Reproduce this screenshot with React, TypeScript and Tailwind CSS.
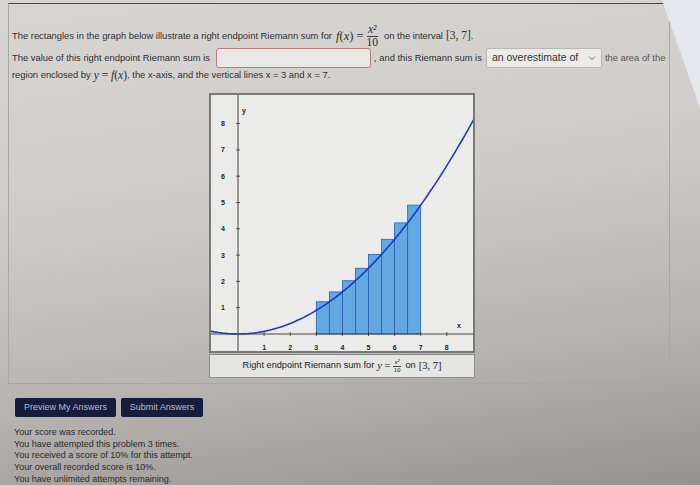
import React from 'react';

const sans = { fontFamily: '"Liberation Sans", Arial, sans-serif' };
const serif = { fontFamily: '"Liberation Serif", "DejaVu Serif", serif' };

// plot mapping (inner svg coords)
const px = (x: number) => 27 + 26.1 * x;
const py = (y: number) => 239 - 26.3 * y;
const f = (x: number) => (x * x) / 10;

function Frac({ top, bottom, small }: { top: React.ReactNode; bottom: React.ReactNode; small?: boolean }) {
  return (
    <span
      className={`inline-flex flex-col items-center leading-none align-middle mx-[2px] ${small ? 'text-[7px]' : 'text-[11.5px]'}`}
      style={serif}
    >
      <span className="px-[1px] border-b border-[#444]">{top}</span>
      <span className="px-[1px]">{bottom}</span>
    </span>
  );
}

function Plot() {
  const pts: string[] = [];
  for (let x = -1.1; x <= 9.1; x += 0.1) pts.push(`${px(x).toFixed(1)},${py(f(x)).toFixed(1)}`);
  const rects = Array.from({ length: 8 }, (_, i) => {
    const xr = 3 + 0.5 * (i + 1);
    return { x: px(xr - 0.5), w: px(xr) - px(xr - 0.5), y: py(f(xr)), h: py(0) - py(f(xr)) };
  });
  return (
    <svg width="262" height="256" viewBox="0 0 262 256" className="block">
      {rects.map((r, i) => (
        <rect key={i} x={r.x} y={r.y} width={r.w} height={r.h} fill="#62a8e2" stroke="#2d5db3" strokeWidth="0.8" />
      ))}
      <line x1={px(0)} y1="0" x2={px(0)} y2="256" stroke="#333" strokeWidth="0.9" />
      <line x1="0" y1={py(0)} x2="262" y2={py(0)} stroke="#333" strokeWidth="0.9" />
      {[1, 2, 3, 4, 5, 6, 7, 8].map((n) => (
        <g key={n} fontFamily='"Liberation Sans", Arial, sans-serif' fontSize="7" fontWeight="700" fill="#222">
          <line x1={px(n)} y1={py(0) - 2} x2={px(n)} y2={py(0) + 2} stroke="#333" strokeWidth="0.8" />
          <text x={px(n)} y={py(0) + 16} textAnchor="middle">{n}</text>
          <line x1={px(0) - 2} y1={py(n)} x2={px(0) + 2} y2={py(n)} stroke="#333" strokeWidth="0.8" />
          <text x="12" y={py(n) + 2.5} textAnchor="middle">{n}</text>
        </g>
      ))}
      <text x="31" y="18" fontFamily='"Liberation Sans", Arial, sans-serif' fontSize="7" fontWeight="700" fill="#222">y</text>
      <text x="246" y="233" fontFamily='"Liberation Sans", Arial, sans-serif' fontSize="7" fontWeight="700" fill="#222">x</text>
      <polyline points={pts.join(' ')} fill="none" stroke="#1f3cc0" strokeWidth="1.6" />
    </svg>
  );
}

export default function App() {
  return (
    <div
      className="relative w-[700px] h-[485px] overflow-hidden text-[#2e2e2e] bg-[linear-gradient(172deg,#d8d6d3_0%,#cecbc8_40%,#b5b2af_72%,#96928f_100%)]"
      style={sans}
    >
      {/* bright glare at top right */}
      <div className="absolute top-0 right-0 w-[38px] h-[108px] bg-[#e6e6ee] [clip-path:polygon(0_0,100%_0,100%_100%)]" />

      {/* question panel */}
      <div className="ml-[8px] mt-[3px] w-[662px] h-[381px] border border-[#a9a7a4] border-t-[#4a4a4a] pl-[3px] pt-[20px] text-[9.4px]">
        {/* line 1 */}
        <div className="flex items-center h-[24px] whitespace-nowrap">
          <span>The rectangles in the graph below illustrate a right endpoint Riemann sum for</span>
          <span className="ml-[4px] text-[12.5px]" style={serif}>
            <i>f</i>(<i>x</i>) =
          </span>
          <Frac top={<i>x²</i>} bottom="10" />
          <span className="ml-[3px]">on the interval</span>
          <span className="ml-[3px] text-[11.5px]" style={serif}>[3, 7]</span>
          <span>.</span>
        </div>

        {/* line 2 */}
        <div className="flex items-center h-[20px] whitespace-nowrap">
          <span>The value of this right endpoint Riemann sum is</span>
          <div className="ml-[6px] w-[155px] h-[20px] rounded-[3px] border border-[#c07a78] bg-[#e9e8e5]" />
          <span className="ml-[3px]">, and this Riemann sum is</span>
          <div className="ml-[4px] w-[116px] h-[20px] rounded-[2px] border border-[#b9b7b4] bg-[#ecebe8] flex items-center justify-between pl-[5px] pr-[5px]">
            <span className="text-[10.5px] text-[#333]">an overestimate of</span>
            <svg width="8" height="6" viewBox="0 0 8 6">
              <path d="M1 1.5 L4 4.5 L7 1.5" fill="none" stroke="#777" strokeWidth="1" />
            </svg>
          </div>
          <span className="ml-[3px] text-[#555]">the area of the</span>
        </div>

        {/* line 3 */}
        <div className="flex items-center h-[15px] whitespace-nowrap">
          <span>region enclosed by</span>
          <span className="ml-[3px] text-[11.5px]" style={serif}>
            <i>y</i> = <i>f</i>(<i>x</i>)
          </span>
          <span>, the x-axis, and the vertical lines x = 3 and x = 7.</span>
        </div>

        {/* graph */}
        <div className="ml-[197px] mt-[10px] w-[266px]">
          <div className="h-[260px] border-2 border-[#7a7977] bg-[#ebecea]">
            <Plot />
          </div>
          <div className="mt-[1px] h-[24px] border border-[#8d8b89] bg-[#e5e5e2] flex items-center justify-center whitespace-nowrap text-[9.2px] text-[#222]">
            <span>Right endpoint Riemann sum for</span>
            <span className="ml-[3px] text-[10.5px]" style={serif}>
              <i>y</i> =
            </span>
            <Frac small top={<i>x²</i>} bottom="10" />
            <span className="ml-[2px]">on</span>
            <span className="ml-[3px] text-[10.5px]" style={serif}>[3, 7]</span>
          </div>
        </div>
      </div>

      {/* buttons */}
      <div className="flex gap-[5px] ml-[15px] mt-[14px]">
        <button className="h-[19px] w-[101px] rounded-[2px] bg-[#161c3c] text-[9px] text-[#b9bdd2]">Preview My Answers</button>
        <button className="h-[19px] w-[82px] rounded-[2px] bg-[#161c3c] text-[9px] text-[#b9bdd2]">Submit Answers</button>
      </div>

      {/* score messages */}
      <div className="ml-[14px] mt-[10px] text-[9px] leading-[11.7px] text-[#2a2a2a]">
        <div>Your score was recorded.</div>
        <div>You have attempted this problem 3 times.</div>
        <div>You received a score of 10% for this attempt.</div>
        <div>Your overall recorded score is 10%.</div>
        <div>You have unlimited attempts remaining.</div>
      </div>
    </div>
  );
}
